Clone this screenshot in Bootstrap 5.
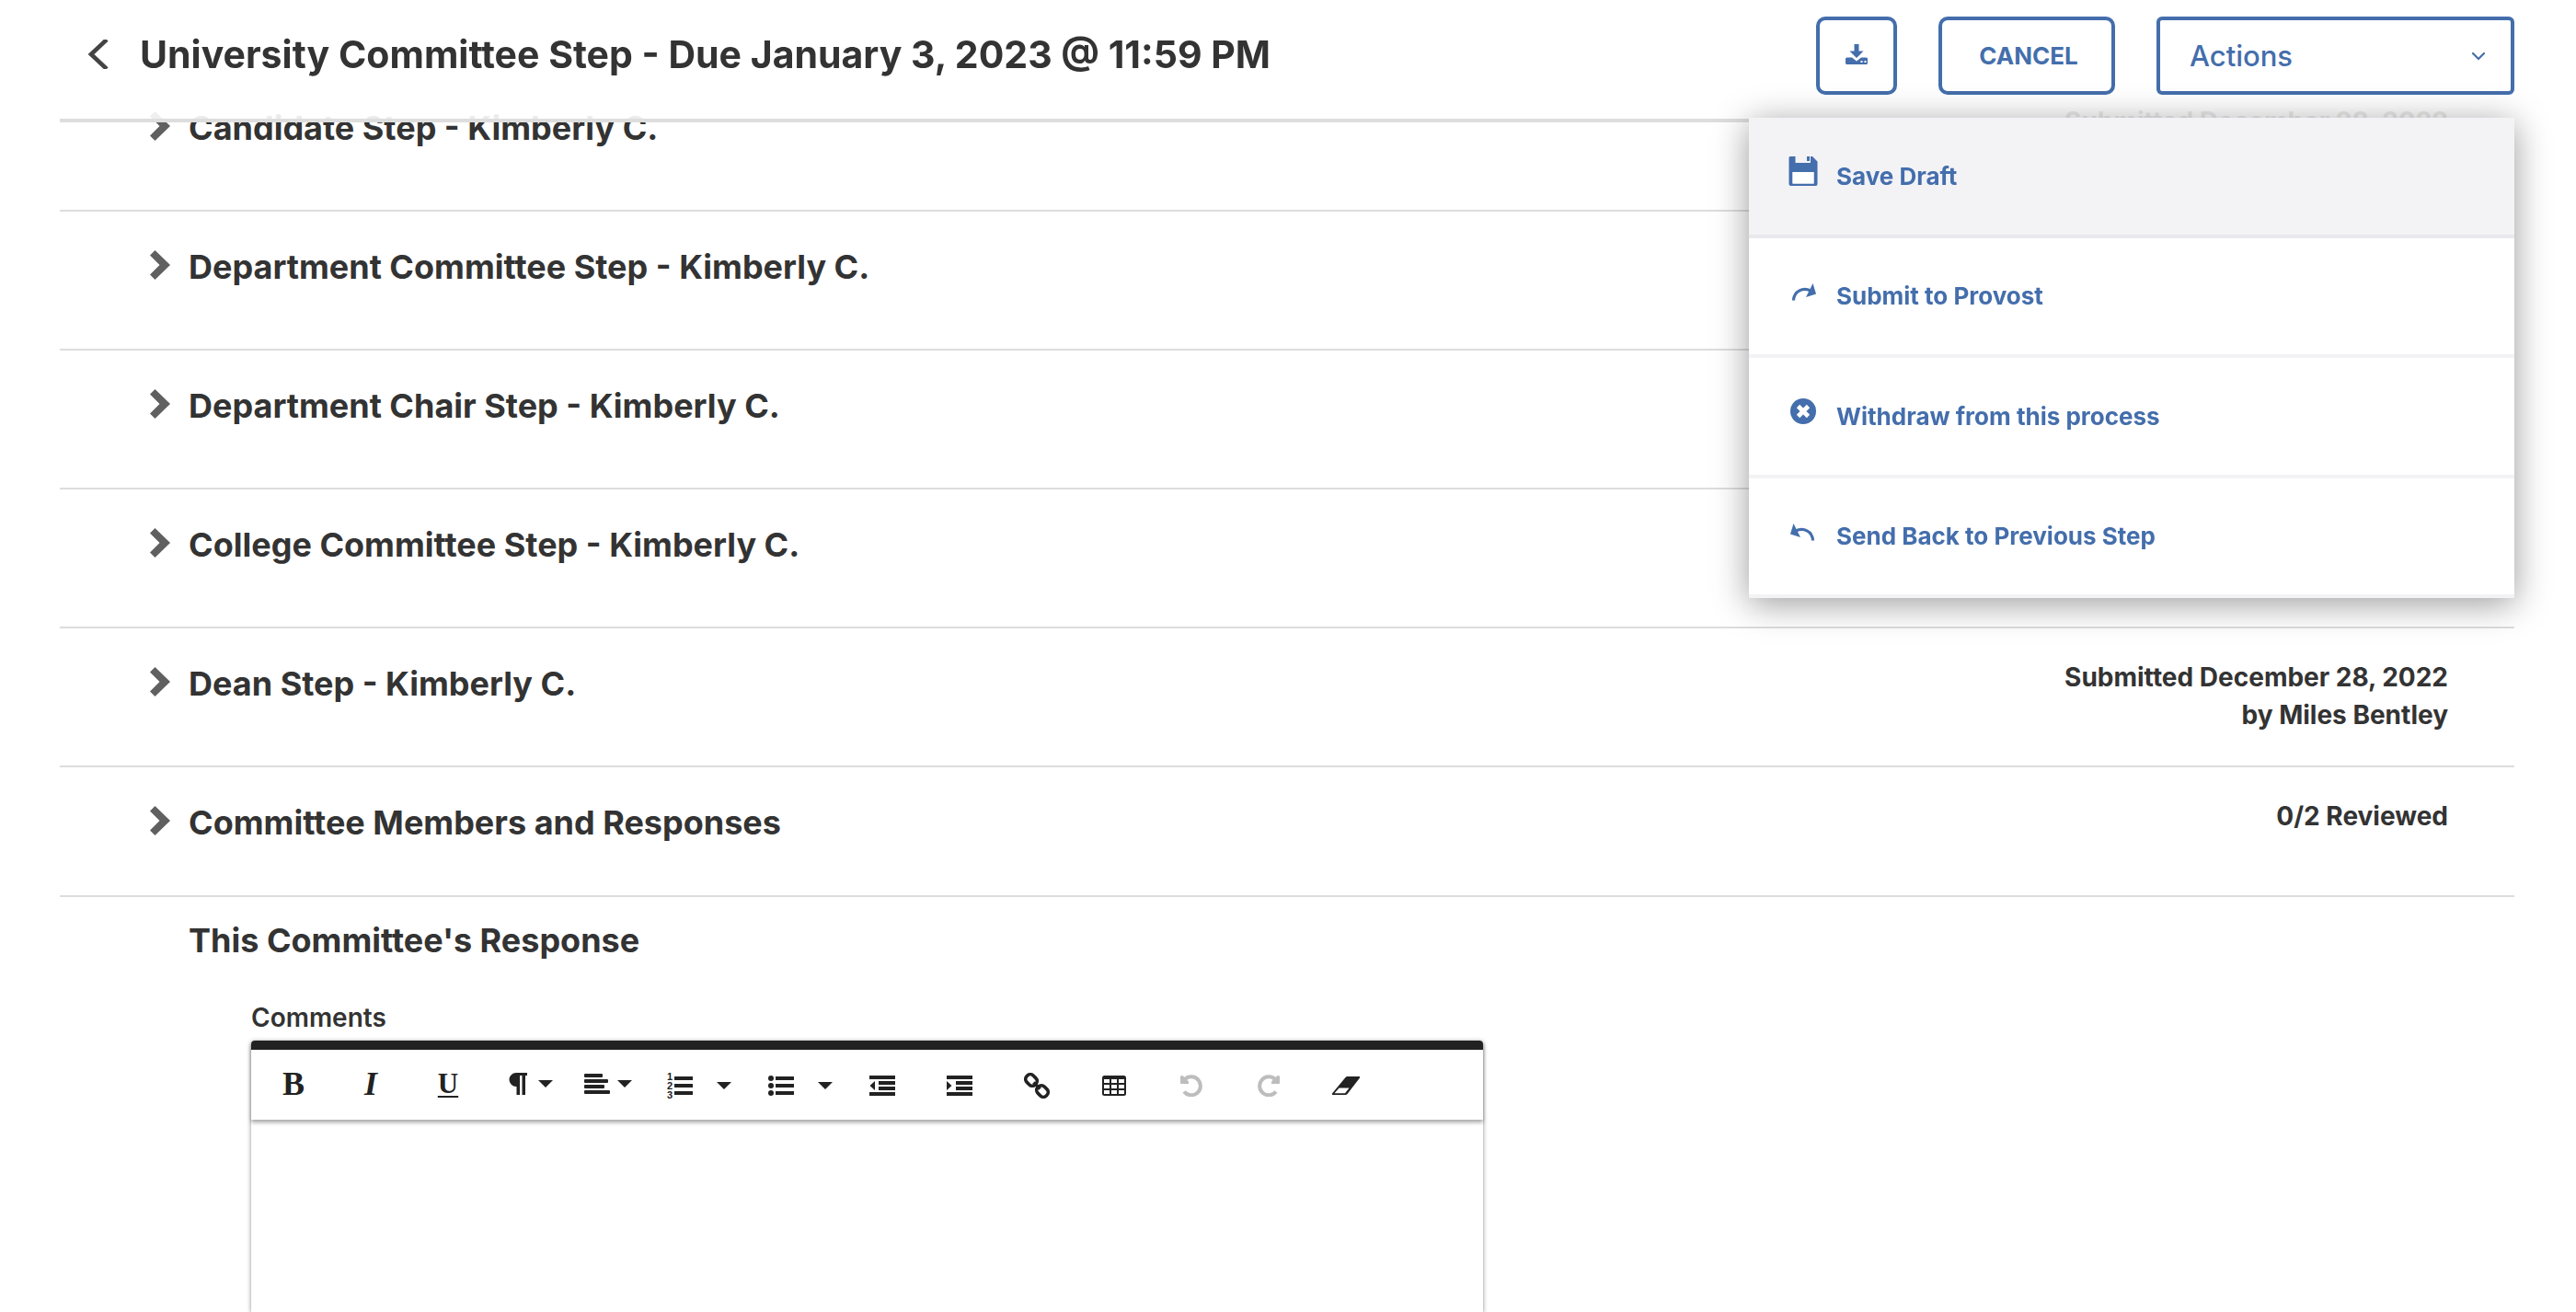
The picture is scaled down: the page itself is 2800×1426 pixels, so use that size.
<!DOCTYPE html>
<html lang="en">
<head>
<meta charset="utf-8">
<meta name="viewport" content="width=device-width, initial-scale=1">
<title>University Committee Step</title>
<link href="https://cdn.jsdelivr.net/npm/bootstrap@5.3.0/dist/css/bootstrap.min.css" rel="stylesheet">
<style>
  :root { --ink: #333; --blue: #446eac; --rule: #ddd; --tool: #222; }
  body { font-family: Inter, "Liberation Sans", sans-serif; color: var(--ink); font-size: 28px; line-height: 41px; }
  .shell { padding: 79px 67px 0 65px; }

  .topbar { padding: 0 67px 0 65px; }
  .topbar-inner { height: 133px; padding: 18px 0 0 28px; border-bottom: 4px solid var(--rule); background: rgba(255,255,255,.9); }
  .back-link { width: 28px; height: 32px; margin-right: 31px; }
  .page-title { font-size: 41px; line-height: 50px; font-weight: 700; }
  .top-actions { gap: 45px; }
  .btn-line { --bs-btn-color: var(--blue); --bs-btn-bg: #fff; --bs-btn-border-color: var(--blue); --bs-btn-border-width: 4px;
    --bs-btn-border-radius: 10px; --bs-btn-font-family: inherit; --bs-btn-hover-color: #fff; --bs-btn-hover-bg: var(--blue);
    --bs-btn-active-color: var(--blue); --bs-btn-active-bg: #fff; --bs-btn-active-border-color: var(--blue); height: 85px; }
  .btn-download { width: 88px; padding: 0; }
  .btn-cancel { width: 192px; padding: 0 0 0 4px; font-size: 26px; font-weight: 700; }
  .btn-actions { width: 389px; padding: 2px 28px 0 32px; font-size: 31px; font-weight: 500; --bs-btn-border-radius: 6px; }

  .action-menu { --bs-dropdown-border-width: 0; --bs-dropdown-border-radius: 0; --bs-dropdown-padding-y: 0; --bs-dropdown-font-size: 26px;
    --bs-dropdown-link-color: var(--blue); --bs-dropdown-link-hover-color: var(--blue); --bs-dropdown-link-hover-bg: #f3f3f6;
    width: 832px; height: 522px; top: 110px; right: 0; box-shadow: 0 6px 36px rgba(0,0,0,.4); }
  .action-menu.show { display: flex; }
  .action-menu .dropdown-item { padding: 0 43px; font-weight: 700; border-bottom: 4px solid #f3f3f5; height: 100%; }
  .action-menu .current { background: #f3f3f6; border-color: #e8e8ed; }
  .action-menu svg { width: 32px; height: 32px; margin: 0 20px 10px 0; }

  .step-row { min-height: 151px; padding: 33px 72px 0 98px; border-bottom: 2px solid var(--rule); }
  .step-row.short-row { min-height: 141px; }
  .step-toggle { gap: 20px; color: var(--ink); }
  .step-toggle svg { margin-bottom: 4px; }
  .section-title { font-size: 36px; line-height: 54px; font-weight: 700; }
  .step-meta { font-weight: 700; }

  .response { padding: 20px 0 0 140px; }
  .comment-box { padding: 37px 0 0 68px; width: 1407px; }
  .comment-label { font-weight: 600; margin-bottom: 4px; }
  .editor { border-radius: 4px 4px 0 0; box-shadow: 0 1px 5px rgba(0,0,0,.45); }
  .toolbar { border-top: 10px solid var(--tool); border-radius: 4px 4px 0 0; height: 86px; padding: 0 4px 2px; box-shadow: 0 3px 4px rgba(0,0,0,.35); position: relative; background: #fff; }
  .tool { width: 76px; height: 74px; margin: 0 4px; padding: 0; border: 0; background: none; color: var(--tool); }
  .tool:disabled { color: #bdbdbd; opacity: 1; }
  .tool-text { font: 36px "Liberation Serif", serif; }
  .tool-underline { font-size: 31px; font-weight: 700; text-decoration: underline 2px; text-underline-offset: 3px; }
  .tool-menu { padding-left: 11px; }
  .tool-more { width: 20px; margin: 0 10px 0 0; }
  .tool-split .tool:first-child { margin-right: 0; }
  .writing { border: 0; resize: none; outline: 0; padding: 32px; }
  .list-digits { overflow: visible; font: 700 11px "Liberation Sans", sans-serif; }
</style>
<script src="https://cdn.jsdelivr.net/npm/bootstrap@5.3.0/dist/js/bootstrap.bundle.min.js"></script>
</head>
<body class="bg-white">

<header class="topbar fixed-top">
  <div class="topbar-inner d-flex justify-content-between align-items-start">
    <div class="d-flex align-items-center mt-3">
      <a class="back-link d-flex" href="#" aria-label="Back"><svg width="28" height="32" viewBox="0 0 28 32"><path d="M23 0 6 16 23 32" fill="none" stroke="#444" stroke-width="4.600"/></svg></a>
      <h1 class="page-title mb-0">University Committee Step - Due January 3, 2023 @ 11:59 PM</h1>
    </div>
    <div class="top-actions d-flex">
      <button type="button" class="btn btn-line btn-download d-flex align-items-center justify-content-center" aria-label="Download">
        <svg class="mb-1" width="24" height="22" viewBox="0 0 24 22" fill="currentColor"><path d="M9.500 0h5v7.500h5L12 15 4.500 7.500h5zM1.500 14.500h5.500l5 4 5-4h5.500a1.500 1.500 0 0 1 1.500 1.500V20.500a1.500 1.500 0 0 1-1.500 1.500H1.500A1.500 1.500 0 0 1 0 20.500V16a1.500 1.500 0 0 1 1.500-1.500z"/><path fill="#fff" d="M16.500 18h2v2h-2zM20.500 18h2v2h-2z"/></svg>
      </button>
      <button type="button" class="btn btn-line btn-cancel">CANCEL</button>
      <div class="dropdown">
        <button type="button" class="btn btn-line btn-actions d-flex align-items-center justify-content-between" data-bs-toggle="dropdown" aria-expanded="true">
          Actions
          <svg width="14" height="9" viewBox="0 0 14 9"><path d="M1 1l6 6 6-6" fill="none" stroke="currentColor" stroke-width="2.200" stroke-linecap="round"/></svg>
        </button>
        <ul class="dropdown-menu action-menu show flex-column">
          <li class="flex-fill"><a class="dropdown-item current d-flex align-items-center" href="#">
            <svg viewBox="0 0 32 32"><path fill="currentColor" fill-rule="evenodd" d="M2 0h5.500v7h16.500V0H26l5.500 5.500V30a2 2 0 0 1-2 2H2.500a2 2 0 0 1-2-2V1.500A1.500 1.500 0 0 1 2 0zM4.500 17v12.500h23V17zM20 0h3v5h-3z"/><path fill="#fff" d="M4.500 17h23v12.500h-23z"/></svg>Save Draft</a></li>
          <li class="flex-fill"><a class="dropdown-item d-flex align-items-center" href="#">
            <svg viewBox="0 0 32 32"><path d="M5.500 25.500C6 15 16 11 24 15" fill="none" stroke="currentColor" stroke-width="3.200"/><path fill="currentColor" d="M26.500 7 30 18.500l-11 3.500z"/></svg>Submit to Provost</a></li>
          <li class="flex-fill"><a class="dropdown-item d-flex align-items-center" href="#">
            <svg viewBox="0 0 32 32"><circle cx="16" cy="16" r="14" fill="currentColor"/><path d="M10.500 10.500l11 11M21.500 10.500l-11 11" stroke="#fff" stroke-width="4.800"/></svg>Withdraw from this process</a></li>
          <li class="flex-fill"><a class="dropdown-item d-flex align-items-center" href="#">
            <svg viewBox="0 0 32 32"><path d="M26.500 25.500C26 15 16 11 8 15" fill="none" stroke="currentColor" stroke-width="3.200"/><path fill="currentColor" d="M5.500 7 2 18.500l11 3.500z"/></svg>Send Back to Previous Step</a></li>
        </ul>
      </div>
    </div>
  </div>
</header>

<svg class="d-none"><defs>
  <symbol id="chev" viewBox="0 0 22 32"><path fill="#606060" d="M5.500 0 22 16 5.500 32 0 26.500 10.500 16 0 5.500z"/></symbol>
  <symbol id="caret" viewBox="0 0 16 8"><path fill="currentColor" d="M0 0h16L8 8z"/></symbol>
</defs></svg>

<main class="shell vh-100 d-flex flex-column overflow-hidden">
  <section class="step-row d-flex justify-content-between align-items-start">
    <a class="step-toggle d-flex align-items-center text-decoration-none" href="#"><svg width="22" height="32"><use href="#chev"/></svg><h2 class="section-title mb-0">Candidate Step - Kimberly C.</h2></a>
    <div class="step-meta text-end">Submitted December 28, 2022</div>
  </section>
  <section class="step-row d-flex justify-content-between align-items-start">
    <a class="step-toggle d-flex align-items-center text-decoration-none" href="#"><svg width="22" height="32"><use href="#chev"/></svg><h2 class="section-title mb-0">Department Committee Step - Kimberly C.</h2></a>
  </section>
  <section class="step-row d-flex justify-content-between align-items-start">
    <a class="step-toggle d-flex align-items-center text-decoration-none" href="#"><svg width="22" height="32"><use href="#chev"/></svg><h2 class="section-title mb-0">Department Chair Step - Kimberly C.</h2></a>
  </section>
  <section class="step-row d-flex justify-content-between align-items-start">
    <a class="step-toggle d-flex align-items-center text-decoration-none" href="#"><svg width="22" height="32"><use href="#chev"/></svg><h2 class="section-title mb-0">College Committee Step - Kimberly C.</h2></a>
  </section>
  <section class="step-row d-flex justify-content-between align-items-start">
    <a class="step-toggle d-flex align-items-center text-decoration-none" href="#"><svg width="22" height="32"><use href="#chev"/></svg><h2 class="section-title mb-0">Dean Step - Kimberly C.</h2></a>
    <div class="step-meta text-end">Submitted December 28, 2022<br>by Miles Bentley</div>
  </section>
  <section class="step-row short-row d-flex justify-content-between align-items-start">
    <a class="step-toggle d-flex align-items-center text-decoration-none" href="#"><svg width="22" height="32"><use href="#chev"/></svg><h2 class="section-title mb-0">Committee Members and Responses</h2></a>
    <div class="step-meta text-end">0/2 Reviewed</div>
  </section>

  <section class="response d-flex flex-column flex-grow-1">
    <h2 class="section-title mb-0">This Committee's Response</h2>
    <div class="comment-box d-flex flex-column flex-grow-1 mw-100">
      <label class="comment-label" for="comments">Comments</label>
      <div class="editor d-flex flex-column flex-grow-1">
        <div class="toolbar d-flex align-items-center" role="toolbar" aria-label="Text formatting">
          <button type="button" class="tool tool-text fw-bold" aria-label="Bold">B</button>
          <button type="button" class="tool tool-text fst-italic fw-bold" aria-label="Italic">I</button>
          <button type="button" class="tool tool-text tool-underline" aria-label="Underline">U</button>
          <button type="button" class="tool tool-menu d-flex align-items-center justify-content-center gap-2" aria-label="Paragraph format">
            <svg class="me-1" width="20" height="24" viewBox="0 0 20 24" fill="currentColor"><path d="M8 0h12v3h-2v21h-3.500V3H12v21H8.500v-9H8A7.500 7.500 0 0 1 8 0z"/></svg>
            <svg width="16" height="8"><use href="#caret"/></svg></button>
          <button type="button" class="tool tool-menu d-flex align-items-center justify-content-center gap-2" aria-label="Align">
            <svg width="28" height="22" viewBox="0 0 28 22" fill="currentColor"><rect width="20" height="4" rx="1"/><rect y="6" width="26" height="4" rx="1"/><rect y="12" width="22" height="4" rx="1"/><rect y="18" width="28" height="4" rx="1"/></svg>
            <svg width="16" height="8"><use href="#caret"/></svg></button>
          <div class="tool-split d-flex">
            <button type="button" class="tool" aria-label="Ordered list"><svg class="list-digits" width="28" height="28" viewBox="0 0 28 28" fill="currentColor"><text y="8">1</text><text y="18">2</text><text y="28">3</text><path d="M8 4h20v4H8zM8 12h20v4H8zM8 20h20v4H8z"/></svg></button>
            <button type="button" class="tool tool-more" aria-label="Ordered list styles"><svg width="16" height="8"><use href="#caret"/></svg></button>
          </div>
          <div class="tool-split d-flex">
            <button type="button" class="tool" aria-label="Bulleted list"><svg width="28" height="28" viewBox="0 0 28 28" fill="currentColor"><circle cx="3" cy="6" r="3"/><circle cx="3" cy="14" r="3"/><circle cx="3" cy="22" r="3"/><path d="M8 4h20v4H8zM8 12h20v4H8zM8 20h20v4H8z"/></svg></button>
            <button type="button" class="tool tool-more" aria-label="Bulleted list styles"><svg width="16" height="8"><use href="#caret"/></svg></button>
          </div>
          <button type="button" class="tool" aria-label="Decrease indent"><svg width="28" height="22" viewBox="0 0 28 22" fill="currentColor"><path d="M0 0h28v4H0zM10 6h18v4H10zM10 12h18v4H10zM0 18h28v4H0zM6 6v10L.5 11z"/></svg></button>
          <button type="button" class="tool" aria-label="Increase indent"><svg width="28" height="22" viewBox="0 0 28 22" fill="currentColor"><path d="M0 0h28v4H0zM10 6h18v4H10zM10 12h18v4H10zM0 18h28v4H0zM0 6v10l5.500-5z"/></svg></button>
          <button type="button" class="tool" aria-label="Link"><svg width="28" height="28" viewBox="0 0 28 28"><g transform="rotate(45 14 14)" fill="none" stroke="currentColor" stroke-width="3.600"><rect x="-1" y="9" width="13" height="10" rx="4.500"/><rect x="16" y="9" width="13" height="10" rx="4.500"/><path d="M9 14h10"/></g></svg></button>
          <button type="button" class="tool" aria-label="Table"><svg width="26" height="22" viewBox="0 0 26 22"><rect width="26" height="22" rx="2.500" fill="currentColor"/><path fill="#fff" d="M2 4h6v4H2zM10 4h6v4h-6zM18 4h6v4h-6zM2 10h6v4H2zM10 10h6v4h-6zM18 10h6v4h-6zM2 16h6v4H2zM10 16h6v4h-6zM18 16h6v4h-6z"/></svg></button>
          <button type="button" class="tool" aria-label="Undo" disabled><svg width="24" height="24" viewBox="0 0 24 24"><path d="M5 5A10 10 0 1 1 4 18.500" fill="none" stroke="currentColor" stroke-width="4"/><path fill="currentColor" d="M0 1.500 2.500 1 9 7.500V10H1a1 1 0 0 1-1-1z"/></svg></button>
          <button type="button" class="tool" aria-label="Redo" disabled><svg width="24" height="24" viewBox="0 0 24 24"><g transform="matrix(-1 0 0 1 24 0)"><path d="M5 5A10 10 0 1 1 4 18.500" fill="none" stroke="currentColor" stroke-width="4"/><path fill="currentColor" d="M0 1.500 2.500 1 9 7.500V10H1a1 1 0 0 1-1-1z"/></g></svg></button>
          <button type="button" class="tool" aria-label="Clear formatting"><svg width="30" height="20" viewBox="0 0 30 20"><path fill="currentColor" fill-rule="evenodd" d="M14.500 1A3 3 0 0 1 16.500 0H29a1 1 0 0 1 .8 1.800L16.500 19a3 3 0 0 1-2 1H1a1 1 0 0 1-.8-1.800zM7.500 12.500 2.500 18.200H14l4.500-5.700z"/></svg></button>
        </div>
        <textarea id="comments" class="writing flex-grow-1 w-100"></textarea>
      </div>
    </div>
  </section>
</main>
</body>
</html>
